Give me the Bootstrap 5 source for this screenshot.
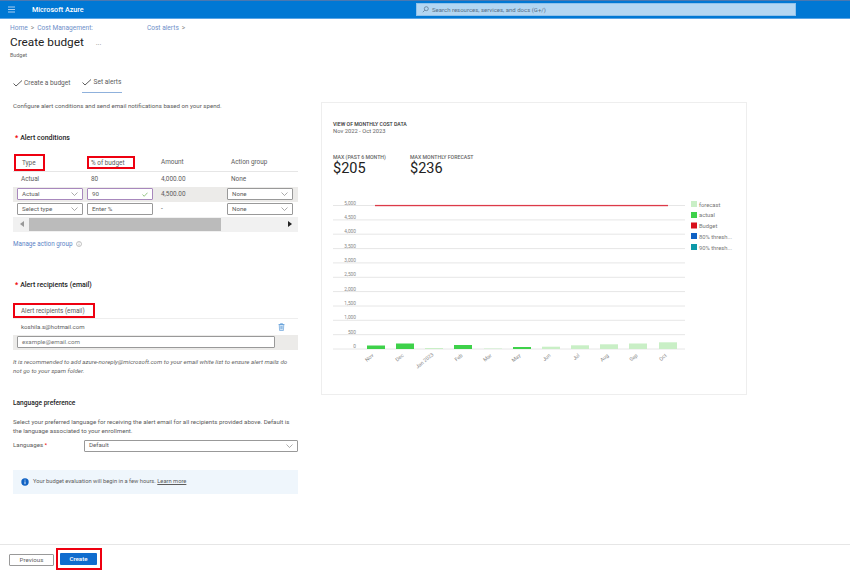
<!DOCTYPE html>
<html lang="en">
<head>
<meta charset="utf-8">
<title>Create budget</title>
<link href="https://cdn.jsdelivr.net/npm/bootstrap@5.3.0/dist/css/bootstrap.min.css" rel="stylesheet">
<style>
html,body{height:100%;margin:0}
body{font-family:Roboto,"Liberation Sans",sans-serif;font-size:6.15px;line-height:9px;color:#5c5c5c;background:#fff;overflow:hidden}
.shell{height:575px}
.topbar{height:19px;background:#0078d4;border-top:1px solid #4a78b0;border-bottom:1px solid #5aa5e6;padding:0 0 0 8px;flex-wrap:nowrap;justify-content:flex-start}
.brand{font-size:7.2px;font-weight:500;color:#fff;margin-left:16px;width:384px}
.searchbox{width:380px;height:13px;background:#b3d6f2;border:1px solid #8fc1ea;color:#55708a;padding-left:5px;gap:3px;font-size:6px}
.crumbs{margin:4px 0 0 10px;height:11px;color:#6f8fc9;font-size:6.6px;line-height:11px}
.crumbs .sep{color:#888;margin:0 3px}
.crumbs .gap1{width:54px}
.pagetitle{margin:0 0 0 10px;font-size:11.8px;line-height:17px;color:#222;font-weight:400;height:17px}
.pagetitle .more{color:#888;font-size:7px;margin-left:9px;vertical-align:1px}
.subt{margin:0 0 0 10px;font-size:5.4px;line-height:8px;color:#666}
.tabrow{margin:17px 0 0 13px;gap:11px;height:17px;font-size:6.6px}
.tabitem{gap:1px;height:17px;padding-right:1px;color:#5c5c5c;align-items:center;padding-bottom:3px}
.tabitem.on{border-bottom:1px solid #8fb1dc}
.bodycols{align-items:flex-start}
.leftcol{width:285px;margin-left:13px;flex:none}
.intro{margin-top:9px;height:9px}
.sechead{font-size:7px;font-weight:500;color:#222;line-height:10px}
.sechead .req{color:#e00;font-weight:700;margin:0 2px 0 2px}
.hd1{margin-top:22px}
.condtable{width:285px;margin:11px 0 0;table-layout:fixed;font-size:6.4px;--bs-table-bg:transparent;--bs-table-color:#5c5c5c;border-collapse:collapse}
.c70{width:70px}
.condtable td,.condtable th{padding:0;border:0;vertical-align:middle;font-weight:400;box-shadow:none}
.condtable thead th{height:17px;border-bottom:1px solid #e6e6e6;white-space:nowrap}
.condtable .r1 td{height:15px}
.condtable .r2 td{height:15px;background:#ecebe9}
.condtable .r3 td{height:15px}
.condtable .t{padding-left:8px}
.flagged{display:inline-block;border:2px solid #ee0010;line-height:11px}
.f1{margin-left:1px;width:31px;height:17px;padding:2px 0 0 6px}
.f2{margin-left:4px;width:48px;height:13px;padding:0 0 0 2px}
.fld{height:12px;min-height:12px;font-size:6.2px;line-height:9px;border:1px solid #999;border-radius:1px;padding:0 4px;color:#5c5c5c;background:#fff;display:flex;align-items:center;justify-content:space-between}
.fld.edit{border-color:#a888bd}
.fld.f-a{width:66px;margin-left:4px}
.fld.f-b{width:66px;margin-left:4px}
.scrollrow{height:15px;margin-top:0;background:#f1f1f1;align-items:center}
.scrollthumb{width:192px;height:13px;background:#bbb;margin-left:5px}
.ar{width:0;height:0;border-top:3px solid transparent;border-bottom:3px solid transparent}
.ar.l{border-right:4px solid #999;margin-left:7px;margin-right:0}
.ar.r{border-left:4px solid #222;margin-left:auto;margin-right:6px}
.linkrow{margin-top:8px;color:#5b83c6;gap:4px;height:9px;font-size:6.3px}
.hd2{margin-top:31px}
.recbox{display:block;border:2px solid #ee0010;width:82px;height:15px;margin-top:13px;padding:2px 0 0 6px;line-height:9px;white-space:nowrap;font-size:6.3px}
.recline{border-top:1px solid #eee;height:17px;padding:0 13px 0 8px;font-size:6.1px}
.recinput{height:15px;background:#ecebe9;padding-left:4px;align-items:center}
.recinput .fld{width:258px;color:#777}
.note{font-style:italic;line-height:9px;margin-top:8px;color:#666;padding-right:6px}
.hd3{margin-top:22px;font-size:6.6px}
.para{margin-top:10px;line-height:9px}
.langrow{margin-top:4px;height:12px}
.langlabel{width:71px}
.langlabel span{color:#e00}
.fld.lang{width:214px;flex:none}
.infobox{margin-top:18px;height:24px;background:#eff6fc;padding-left:8px;gap:4px;border-radius:0;font-size:5.75px}
.infobox a{color:#5c5c5c}
.rightcard{width:426px;height:293px;margin:9px 0 0 23px;border:1px solid #eee;flex:none;border-radius:0}
.chartsvg{display:block}
.chartsvg text{font-family:Roboto,"Liberation Sans",sans-serif}
.ftr{margin-top:auto;height:31px;border-top:1px solid #e6e6e6;padding-left:9px}
.btnprev{width:45px;height:12px;margin-top:9px;border:1px solid #999;border-radius:1px;background:#fff;color:#666;font-size:6.2px;line-height:9px;padding:0}
.btnwrap{border:2px solid #ee0010;width:46px;height:22px;margin:3px 0 0 2px;padding:3px 0 0 2px}
.btncreate{width:37px;height:12px;background:#0f6cce;border:0;border-radius:1px;color:#fff;font-size:6.2px;font-weight:500;line-height:9px;padding:0}
</style>
</head>
<body>
<div class="shell d-flex flex-column">
  <nav class="navbar topbar d-flex align-items-center">
    <svg width="8" height="7" viewBox="0 0 8 7"><path d="M0 1h7M0 3.5h7M0 6h7" stroke="#a9cdf0" stroke-width="1"/></svg>
    <span class="brand">Microsoft Azure</span>
    <div class="searchbox d-flex align-items-center">
      <svg width="7" height="7" viewBox="0 0 7 7"><circle cx="4.3" cy="2.7" r="2" fill="none" stroke="#55708a" stroke-width=".7"/><path d="M2.8 4.2L.8 6.2" stroke="#55708a" stroke-width=".7"/></svg>
      <span>Search resources, services, and docs (G+/)</span>
    </div>
  </nav>

  <div class="crumbs d-flex align-items-center">
    <span>Home</span><span class="sep">&gt;</span><span>Cost Management:</span><span class="gap1"></span><span>Cost alerts</span><span class="sep">&gt;</span>
  </div>
  <h1 class="pagetitle">Create budget <span class="more">...</span></h1>
  <div class="subt">Budget</div>

  <div class="tabrow d-flex">
    <div class="tabitem d-flex"><svg width="10" height="7" viewBox="0 0 10 7"><path d="M.5 3.5L3 6 9 .5" fill="none" stroke="#333" stroke-width=".8"/></svg><span>Create a budget</span></div>
    <div class="tabitem on d-flex"><svg width="10" height="7" viewBox="0 0 10 7"><path d="M.5 3.5L3 6 9 .5" fill="none" stroke="#333" stroke-width=".8"/></svg><span>Set alerts</span></div>
  </div>

  <div class="bodycols d-flex">
    <div class="leftcol">
      <div class="intro">Configure alert conditions and send email notifications based on your spend.</div>

      <div class="sechead hd1"><span class="req">*</span>Alert conditions</div>
      <table class="table condtable">
        <colgroup><col class="c70"><col class="c70"><col class="c70"><col></colgroup>
        <thead><tr>
          <th><span class="flagged f1">Type</span></th>
          <th><span class="flagged f2">% of budget</span></th>
          <th class="t">Amount</th>
          <th class="t">Action group</th>
        </tr></thead>
        <tbody>
          <tr class="r1"><td class="t">Actual</td><td class="t">80</td><td class="t">4,000.00</td><td class="t">None</td></tr>
          <tr class="r2">
            <td><div class="fld edit f-a"><span>Actual</span><svg width="7" height="4" viewBox="0 0 7 4"><path d="M.5.5L3.5 3.5 6.5.5" fill="none" stroke="#888" stroke-width=".7"/></svg></div></td>
            <td><div class="fld edit f-b"><span>90</span><svg width="6" height="5" viewBox="0 0 6 5"><path d="M.5 2.5L2.2 4.3 5.5.7" fill="none" stroke="#7db96a" stroke-width=".8"/></svg></div></td>
            <td class="t">4,500.00</td>
            <td><div class="fld f-b"><span>None</span><svg width="7" height="4" viewBox="0 0 7 4"><path d="M.5.5L3.5 3.5 6.5.5" fill="none" stroke="#888" stroke-width=".7"/></svg></div></td>
          </tr>
          <tr class="r3">
            <td><div class="fld f-a"><span>Select type</span><svg width="7" height="4" viewBox="0 0 7 4"><path d="M.5.5L3.5 3.5 6.5.5" fill="none" stroke="#888" stroke-width=".7"/></svg></div></td>
            <td><div class="fld f-b"><span>Enter %</span></div></td>
            <td class="t">-</td>
            <td><div class="fld f-b"><span>None</span><svg width="7" height="4" viewBox="0 0 7 4"><path d="M.5.5L3.5 3.5 6.5.5" fill="none" stroke="#888" stroke-width=".7"/></svg></div></td>
          </tr>
        </tbody>
      </table>
      <div class="scrollrow d-flex"><span class="ar l"></span><div class="scrollthumb"></div><span class="ar r"></span></div>
      <div class="linkrow d-flex align-items-center"><span>Manage action group</span><svg width="6" height="6" viewBox="0 0 6 6"><circle cx="3" cy="3" r="2.5" fill="none" stroke="#888" stroke-width=".5"/><path d="M3 2.6v2M3 1.4v.6" stroke="#888" stroke-width=".5"/></svg></div>

      <div class="sechead hd2"><span class="req">*</span>Alert recipients (email)</div>
      <span class="recbox">Alert recipients (email)</span>
      <div class="recline d-flex align-items-center justify-content-between"><span>koshila.s@hotmail.com</span>
        <svg width="7" height="8" viewBox="0 0 7 8"><path d="M.5 1.5h6M2.5 1.5V.6h2v.9M1.2 1.5l.4 6h3.800l.4-6z" fill="#cfe3f5" stroke="#5d9bd6" stroke-width=".6"/><path d="M2.7 3v3M3.500 3v3M4.300 3v3" stroke="#5d9bd6" stroke-width=".4"/></svg></div>
      <div class="recinput d-flex"><div class="fld">example@email.com</div></div>
      <div class="note">It is recommended to add azure-noreply@microsoft.com to your email white list to ensure alert mails do not go to your spam folder.</div>

      <div class="sechead hd3">Language preference</div>
      <div class="para">Select your preferred language for receiving the alert email for all recipients provided above. Default is the language associated to your enrollment.</div>
      <div class="langrow d-flex align-items-center">
        <div class="langlabel">Languages <span>*</span></div>
        <div class="fld lang"><span>Default</span><svg width="7" height="4" viewBox="0 0 7 4"><path d="M.5.5L3.5 3.5 6.5.5" fill="none" stroke="#888" stroke-width=".7"/></svg></div>
      </div>
      <div class="infobox d-flex align-items-center">
        <svg width="8" height="8" viewBox="0 0 8 8"><circle cx="4" cy="4" r="3.700" fill="#0f62c4"/><path d="M4 3.400v2.800M4 1.700v.9" stroke="#fff" stroke-width=".9"/></svg>
        <span>Your budget evaluation will begin in a few hours. <a href="#">Learn more</a></span>
      </div>
    </div>

    <div class="card rightcard">
      <svg class="chartsvg" width="424" height="291" viewBox="322 103 424 291">
        <text x="333" y="126" font-size="5.200" font-weight="500" fill="#333">VIEW OF MONTHLY COST DATA</text>
        <text x="333" y="133" font-size="5.800" fill="#666">Nov 2022 - Oct 2023</text>
        <text x="333" y="159" font-size="5.200" font-weight="500" fill="#666">MAX (PAST 6 MONTH)</text>
        <text x="410" y="159" font-size="5.200" font-weight="500" fill="#666">MAX MONTHLY FORECAST</text>
        <text x="333" y="173" font-size="14.500" fill="#222">$205</text>
        <text x="410" y="173" font-size="14.500" fill="#222">$236</text>
        <path d="M333 205.500H685M333 219.900H685M333 234.200H685M333 248.600H685M333 262.900H685M333 277.300H685M333 291.600H685M333 306H685M333 320.300H685M333 334.700H685M333 349H685" stroke="#e6e6e6" stroke-width="1" fill="none"/>
        <g font-size="4.800" fill="#888" text-anchor="end">
          <text x="356" y="204.500">5,000</text><text x="356" y="219">4,500</text><text x="356" y="233">4,000</text><text x="356" y="247.500">3,500</text><text x="356" y="262">3,000</text><text x="356" y="276">2,500</text><text x="356" y="290.500">2,000</text><text x="356" y="305">1,500</text><text x="356" y="319">1,000</text><text x="356" y="334">500</text><text x="356" y="348">0</text>
        </g>
        <rect x="375" y="204.900" width="293" height="1.300" fill="#dc3a48"/>
        <g fill="#3ed14a">
          <rect x="367" y="345.500" width="18" height="3.500"/>
          <rect x="396" y="343.500" width="18" height="5.500"/>
          <rect x="454" y="345" width="18" height="4"/>
          <rect x="513" y="347" width="18" height="2"/>
        </g>
        <g fill="#c9efc6">
          <rect x="425" y="348" width="18" height="1"/>
          <rect x="484" y="348.500" width="18" height=".5"/>
          <rect x="542" y="346.700" width="18" height="2.300"/>
          <rect x="571" y="345.300" width="18" height="3.700"/>
          <rect x="600" y="344.300" width="18" height="4.700"/>
          <rect x="629" y="343.500" width="18" height="5.500"/>
          <rect x="659" y="342.300" width="18" height="6.700"/>
        </g>
        <g font-size="5.200" fill="#888" text-anchor="end">
          <text transform="translate(374 356) rotate(-40)">Nov</text>
          <text transform="translate(404 356) rotate(-40)">Dec</text>
          <text transform="translate(434 355) rotate(-40)">Jan 2023</text>
          <text transform="translate(463 356) rotate(-40)">Feb</text>
          <text transform="translate(492 356) rotate(-40)">Mar</text>
          <text transform="translate(521 356) rotate(-40)">May</text>
          <text transform="translate(551 356) rotate(-40)">Jun</text>
          <text transform="translate(580 356) rotate(-40)">Jul</text>
          <text transform="translate(609 356) rotate(-40)">Aug</text>
          <text transform="translate(638 356) rotate(-40)">Sep</text>
          <text transform="translate(667 356) rotate(-40)">Oct</text>
        </g>
        <rect x="691" y="201" width="6" height="6" fill="#c9efc6"/>
        <rect x="691" y="212" width="6" height="6" fill="#3ed14a"/>
        <rect x="691" y="222.500" width="6" height="6" fill="#d8101c"/>
        <rect x="691" y="233" width="6" height="6" fill="#0f62c4"/>
        <rect x="691" y="244" width="6" height="6" fill="#0d99a8"/>
        <g font-size="5.800" fill="#777">
          <text x="699" y="206.500">forecast</text>
          <text x="699" y="217">actual</text>
          <text x="699" y="228">Budget</text>
          <text x="699" y="238.500">80% thresh...</text>
          <text x="699" y="249.500">90% thresh...</text>
        </g>
      </svg>
    </div>
  </div>

  <div class="ftr d-flex align-items-start">
    <button type="button" class="btn btnprev">Previous</button>
    <div class="btnwrap"><button type="button" class="btn btncreate">Create</button></div>
  </div>
</div>
<script src="https://cdn.jsdelivr.net/npm/bootstrap@5.3.0/dist/js/bootstrap.bundle.min.js"></script>
</body>
</html>
